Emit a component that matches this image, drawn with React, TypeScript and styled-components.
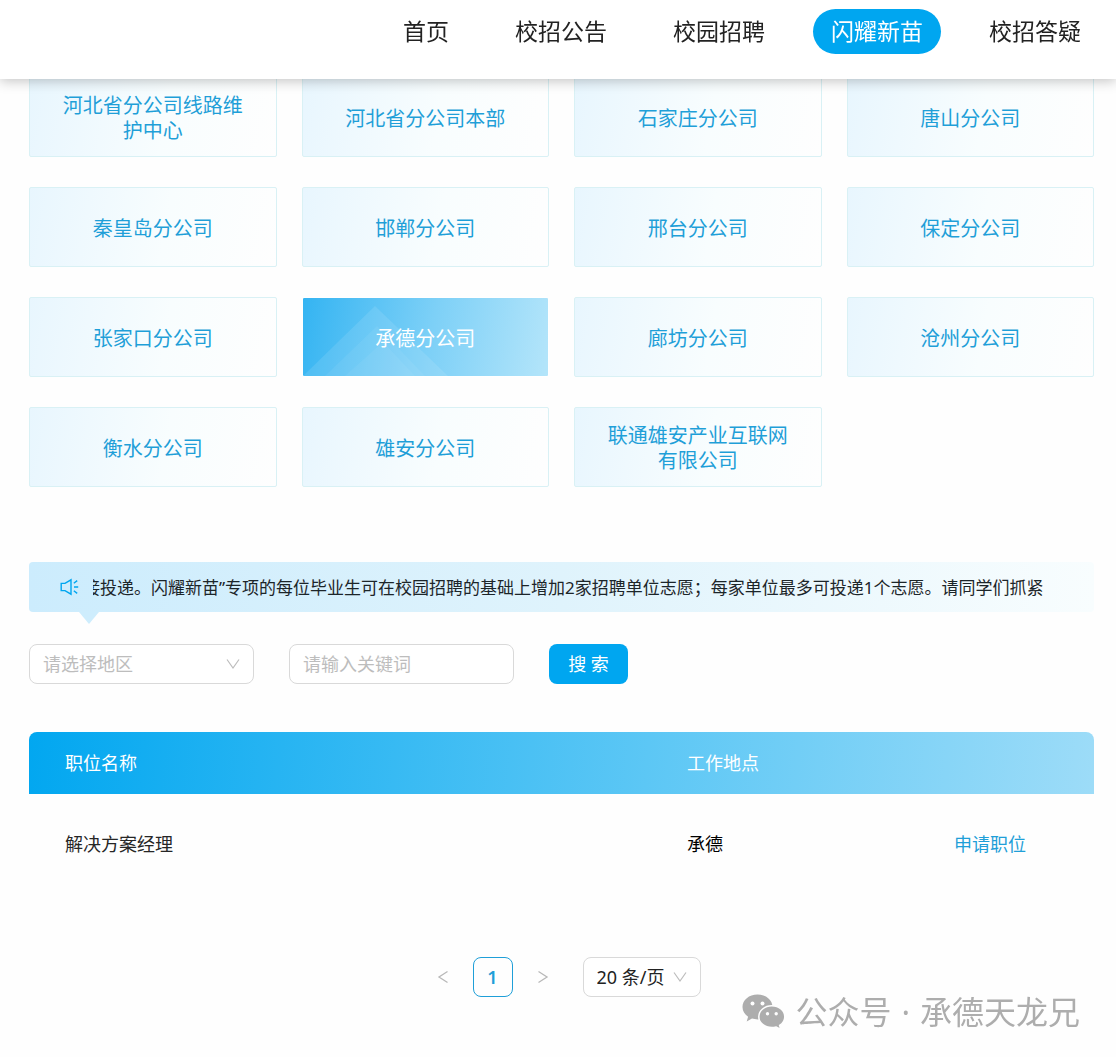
import React, { useState } from "react";
import styled, { createGlobalStyle, css } from "styled-components";

const BRAND = "#00a6f0";
const LINK = "#1f9fd8";

const GlobalStyle = createGlobalStyle`
  *, *::before, *::after { box-sizing: border-box; }
  body {
    margin: 0;
    background: #fefefe;
    color: #262626;
    font-family: "Noto Sans", "Noto Sans CJK SC", sans-serif;
    font-size: 18px;
    line-height: 25px;
  }
  button, input, select { font: inherit; color: inherit; }
`;

const Header = styled.header`
  position: fixed;
  top: 0;
  left: 0;
  right: 0;
  z-index: 10;
  height: 79px;
  padding: 9px 17px 0 0;
  background: #fff;
  box-shadow: 0 2px 12px rgba(0, 0, 0, 0.24);
`;

const Nav = styled.nav`
  display: flex;
  justify-content: flex-end;
  gap: 30px;
`;

const NavLink = styled.a<{ $active?: boolean }>`
  padding: 0 18px;
  border-radius: 23px;
  font-size: 23px;
  line-height: 45px;
  text-decoration: none;
  white-space: nowrap;
  color: ${(p) => (p.$active ? "#fff" : "#222")};
  background: ${(p) => (p.$active ? BRAND : "transparent")};
`;

const Page = styled.main`
  padding: 77px 22px 60px 29px;
`;

const CompanyGrid = styled.div`
  display: grid;
  grid-template-columns: repeat(4, 1fr);
  gap: 30px 25px;
`;

const activeCard = css`
  border-color: #fff;
  color: #fff;
  background: linear-gradient(100deg, #34b4f2 0%, #7dd0f7 52%, #b4e5fa 100%);
`;

const CompanyCard = styled.button<{ $active?: boolean }>`
  position: relative;
  display: flex;
  align-items: center;
  justify-content: center;
  height: 80px;
  padding: 2px 32px 0;
  overflow: hidden;
  border: 1px solid #d9f1f5;
  border-radius: 2px;
  font-size: 20px;
  line-height: 25px;
  color: ${LINK};
  background: linear-gradient(100deg, #e8f6fe 0%, #f8fdfe 55%, #fefefe 100%);
  cursor: pointer;
  ${(p) => p.$active && activeCard}
`;

const CardLabel = styled.span`
  position: relative;
`;

const CardPeaks = styled.svg`
  position: absolute;
  left: 0;
  bottom: 0;
  width: 150px;
  height: 78px;
`;

const Notice = styled.section`
  position: relative;
  display: flex;
  align-items: center;
  gap: 14px;
  height: 50px;
  margin-top: 75px;
  padding: 0 31px;
  border-radius: 4px;
  color: #1c2529;
  background: linear-gradient(90deg, #ccecfd 0%, #dff3fc 50%, #f8fdfe 100%);

  &::after {
    content: "";
    position: absolute;
    left: 50px;
    top: 50px;
    border: solid transparent;
    border-width: 12px 10px 0;
    border-top-color: #ceedfd;
  }
`;

const NoticeIcon = styled.svg`
  flex: none;
  width: 19px;
  height: 18px;
`;

const Ticker = styled.div`
  flex: 1;
  min-width: 0;
  display: flex;
  overflow: hidden;
  font-size: 17px;
  white-space: nowrap;
`;

const TickerText = styled.span`
  margin-left: -10px;
`;

const Filters = styled.form`
  display: flex;
  gap: 35px;
  margin-top: 32px;
`;

const SelectBox = styled.div<{ $width: number }>`
  position: relative;
  width: ${(p) => p.$width}px;
`;

const field = css`
  width: 100%;
  height: 40px;
  padding: 0 13px;
  border: 1px solid #d9d9d9;
  border-radius: 8px;
  outline: none;
  background: #fff;
`;

const Select = styled.select<{ $muted?: boolean }>`
  ${field}
  appearance: none;
  color: ${(p) => (p.$muted ? "#bdbdbd" : "#222")};
`;

const SelectArrow = styled.svg`
  position: absolute;
  right: 14px;
  top: 13px;
  width: 14px;
  height: 14px;
  pointer-events: none;
`;

const KeywordBox = styled.div`
  width: 225px;
`;

const Keyword = styled.input`
  ${field}
  &::placeholder { color: #bdbdbd; opacity: 1; }
`;

const SearchButton = styled.button`
  width: 79px;
  height: 40px;
  padding: 0;
  border: 0;
  border-radius: 8px;
  color: #fff;
  background: ${BRAND};
  cursor: pointer;
`;

const TableWrap = styled.div`
  margin-top: 48px;
  overflow: hidden;
  border-radius: 8px 8px 0 0;
`;

const Table = styled.table`
  width: 100%;
  table-layout: fixed;
  border-collapse: collapse;
  text-align: left;

  thead tr {
    background: linear-gradient(95deg, #02a7f0 0%, #5cc7f5 58%, #9ddcf8 100%);
    color: #fff;
  }
  th, td { padding: 0 0 0 36px; font-weight: 400; }
  th { height: 62px; }
  td { height: 101px; }
`;

const PlaceColumn = styled.col`
  width: 267px;
`;

const ActionColumn = styled.col`
  width: 176px;
`;

const PlaceCell = styled.td`
  color: #000;
`;

const ApplyLink = styled.a`
  color: ${LINK};
  text-decoration: none;
`;

const Pagination = styled.nav`
  display: flex;
  justify-content: center;
  gap: 10px;
  margin-top: 62px;
`;

const PageButton = styled.button<{ $current?: boolean }>`
  display: grid;
  place-items: center;
  width: 40px;
  height: 40px;
  padding: 0;
  border: 1px solid ${(p) => (p.$current ? LINK : "transparent")};
  border-radius: 8px;
  font-weight: 600;
  color: ${LINK};
  background: transparent;
`;

const PageSize = styled.div`
  margin-left: 10px;
`;

const Watermark = styled.footer`
  position: fixed;
  right: 36px;
  bottom: 25px;
  display: flex;
  align-items: center;
  gap: 10px;
  font-size: 32px;
  line-height: 40px;
  color: #adadad;
  white-space: nowrap;
`;

const WechatLogo = styled.svg`
  width: 43px;
  height: 36px;
`;

const navItems = ["首页", "校招公告", "校园招聘", "闪耀新苗", "校招答疑"];

const companies = [
  "河北省分公司线路维护中心",
  "河北省分公司本部",
  "石家庄分公司",
  "唐山分公司",
  "秦皇岛分公司",
  "邯郸分公司",
  "邢台分公司",
  "保定分公司",
  "张家口分公司",
  "承德分公司",
  "廊坊分公司",
  "沧州分公司",
  "衡水分公司",
  "雄安分公司",
  "联通雄安产业互联网有限公司",
];

const jobs = [{ title: "解决方案经理", place: "承德" }];

function Arrow() {
  return (
    <SelectArrow viewBox="0 0 14 14" fill="none" stroke="#bdbdbd" aria-hidden="true">
      <path d="M1 2.5 7 11 13 2.5" strokeWidth="1.2" />
    </SelectArrow>
  );
}

function Chevron({ d }: { d: string }) {
  return (
    <svg width="12" height="14" viewBox="0 0 12 14" fill="none" stroke="#b8b8b8" strokeWidth="1.3" aria-hidden="true">
      <path d={d} />
    </svg>
  );
}

export default function App() {
  const [company, setCompany] = useState("承德分公司");

  return (
    <>
      <GlobalStyle />
      <Header>
        <Nav aria-label="主导航">
          {navItems.map((item) => (
            <NavLink key={item} href="#" $active={item === "闪耀新苗"}>
              {item}
            </NavLink>
          ))}
        </Nav>
      </Header>

      <Page>
        <CompanyGrid>
          {companies.map((name) => (
            <CompanyCard key={name} type="button" $active={name === company} onClick={() => setCompany(name)}>
              {name === company && (
                <CardPeaks viewBox="0 0 150 78" fill="#fff" aria-hidden="true">
                  <path d="M0 78 72 8 145 78Z" fillOpacity="0.1" />
                  <path d="M22 78 74 28 122 78Z" fillOpacity="0.06" />
                  <path d="M42 78 80 44 112 78Z" fillOpacity="0.05" />
                </CardPeaks>
              )}
              <CardLabel>{name}</CardLabel>
            </CompanyCard>
          ))}
        </CompanyGrid>

        <Notice>
          <NoticeIcon viewBox="0 0 19 18" fill="none" stroke={BRAND} strokeWidth="1.4" aria-hidden="true">
            <path d="M1.2 5.4H5L11 1.8V16.2L5 12.6H1.2Z" />
            <path d="M14 9H18.2M13.8 5.2 17.2 2.6M13.8 12.8 17.2 15.4" />
          </NoticeIcon>
          <Ticker>
            <TickerText>
              接投递。闪耀新苗”专项的每位毕业生可在校园招聘的基础上增加2家招聘单位志愿；每家单位最多可投递1个志愿。请同学们抓紧
            </TickerText>
          </Ticker>
        </Notice>

        <Filters onSubmit={(e) => e.preventDefault()}>
          <SelectBox $width={225}>
            <Select $muted aria-label="请选择地区" defaultValue="">
              <option value="">请选择地区</option>
            </Select>
            <Arrow />
          </SelectBox>
          <KeywordBox>
            <Keyword type="text" aria-label="请输入关键词" placeholder="请输入关键词" />
          </KeywordBox>
          <SearchButton type="submit">搜 索</SearchButton>
        </Filters>

        <TableWrap>
          <Table>
            <colgroup>
              <col />
              <PlaceColumn />
              <ActionColumn />
            </colgroup>
            <thead>
              <tr>
                <th scope="col">职位名称</th>
                <th scope="col">工作地点</th>
                <th />
              </tr>
            </thead>
            <tbody>
              {jobs.map((job) => (
                <tr key={job.title}>
                  <td>{job.title}</td>
                  <PlaceCell>{job.place}</PlaceCell>
                  <td>
                    <ApplyLink href="#">申请职位</ApplyLink>
                  </td>
                </tr>
              ))}
            </tbody>
          </Table>
        </TableWrap>

        <Pagination aria-label="分页">
          <PageButton type="button" aria-label="上一页">
            <Chevron d="M10.5 1.5 2 7 10.5 12.5" />
          </PageButton>
          <PageButton type="button" $current>
            1
          </PageButton>
          <PageButton type="button" aria-label="下一页">
            <Chevron d="M1.5 1.5 10 7 1.5 12.5" />
          </PageButton>
          <PageSize>
            <SelectBox $width={118}>
              <Select aria-label="每页条数" defaultValue="20">
                <option value="20">20 条/页</option>
              </Select>
              <Arrow />
            </SelectBox>
          </PageSize>
        </Pagination>
      </Page>

      <Watermark>
        <WechatLogo viewBox="0 0 43 36" aria-hidden="true">
          <path
            fill="#adadad"
            d="M15.5 0.5C7 0.5 0.5 6 0.5 13c0 4 2.200 7.400 5.600 9.700L4.700 27.500l5.300-2.900c1.800.5 3.600.8 5.500.8C24 25.400 30.500 20 30.500 13S24 .5 15.500.5Z"
          />
          <path
            fill="#adadad"
            stroke="#fefefe"
            strokeWidth="1.500"
            d="M29.800 11.800c-7.200 0-13 4.800-13 10.900s5.800 10.900 13 10.900c1.500 0 3-.2 4.400-.6l4.600 2.500-1.200-4.100c3.200-2 5.200-5.100 5.200-8.700 0-6.100-5.800-10.900-13-10.900Z"
          />
          <g fill="#fefefe">
            <circle cx="10.500" cy="9.500" r="2" />
            <circle cx="20.500" cy="9.500" r="2" />
            <circle cx="25.500" cy="19.800" r="1.700" />
            <circle cx="34.200" cy="19.800" r="1.700" />
          </g>
        </WechatLogo>
        <span>公众号</span>
        <span>·</span>
        <span>承德天龙兄</span>
      </Watermark>
    </>
  );
}
